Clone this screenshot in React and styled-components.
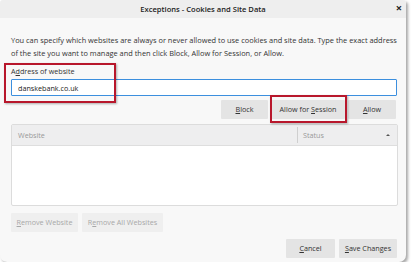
import React from 'react'
import styled, {createGlobalStyle} from 'styled-components'

const GlobalStyle = createGlobalStyle`
    body {
        margin: 0;
        background: #ffffff;
        font-family: "Open Sans", "Noto Sans", sans-serif;
    }
`

const Key = ({children}) => <u>{children}</u>

export default function App(){
    return(
        <>
            <GlobalStyle />
            <Dialog>
                <TitleBar>
                    Exceptions - Cookies and Site Data
                    <Close>×</Close>
                </TitleBar>
                <Body>
                    <Intro>
                        You can specify which websites are always or never allowed to use cookies and site data. Type the exact address of the site you want to manage and then click Block, Allow for Session, or Allow.
                    </Intro>
                    <Label>A<Key>d</Key>dress of website</Label>
                    <Input defaultValue="danskebank.co.uk" />
                    <ButtonRow>
                        <Button $width={47}><Key>B</Key>lock</Button>
                        <Button $width={74}>Allow for <Key>S</Key>ession</Button>
                        <Button $width={48}><Key>A</Key>llow</Button>
                    </ButtonRow>
                    <Table>
                        <HeaderRow>
                            <HeaderCell>Website</HeaderCell>
                            <StatusCell>
                                Status
                                <SortArrow />
                            </StatusCell>
                        </HeaderRow>
                    </Table>
                    <RemoveRow>
                        <Button $disabled $width={67}><Key>R</Key>emove Website</Button>
                        <Button $disabled $width={81}>R<Key>e</Key>move All Websites</Button>
                    </RemoveRow>
                    <FooterRow>
                        <Button $width={49}><Key>C</Key>ancel</Button>
                        <Button $width={58}><Key>S</Key>ave Changes</Button>
                    </FooterRow>
                </Body>
                <Highlight $left={4} $top={63} $width={112} $height={40} />
                <Highlight $left={270} $top={95} $width={77} $height={28} />
            </Dialog>
        </>
    )
}

const Dialog = styled.div`
    position: relative;
    width: 406px;
    height: 262px;
    background: #f8f8f8;
    border-radius: 3px 3px 7px 7px;
    box-shadow: 2px 2px 3px rgba(0, 0, 0, 0.35);
`

const TitleBar = styled.div`
    position: relative;
    height: 18px;
    background: #eeeeee;
    border-radius: 3px 3px 0 0;
    display: flex;
    align-items: center;
    justify-content: center;
    font-size: 7.6px;
    font-weight: 600;
    color: #222;
`

const Close = styled.span`
    position: absolute;
    right: 4px;
    top: 2px;
    font-size: 11px;
    font-weight: 700;
    color: #222;
    line-height: 12px;
`

const Body = styled.div`
    padding: 0 9px 0 11px;
    display: flex;
    flex-direction: column;
`

const Intro = styled.p`
    margin: 16px 0 0 0;
    font-size: 7.42px;
    line-height: 13px;
    color: #333;
`

const Label = styled.div`
    margin-top: 5px;
    font-size: 7.2px;
    line-height: 13px;
    color: #333;
`

const Input = styled.input`
    box-sizing: border-box;
    margin: 1px 0 0 0;
    height: 17px;
    width: 386px;
    border: 1px solid #3c8fde;
    border-radius: 1px;
    background: #fff;
    padding: 0 6px;
    font-family: inherit;
    font-size: 7.2px;
    color: #222;
    outline: none;
`

const ButtonRow = styled.div`
    display: flex;
    justify-content: flex-end;
    gap: 3px;
    margin-top: 4px;
    padding-right: 1px;
`

const Button = styled.div`
    box-sizing: border-box;
    height: 19px;
    width: ${p => p.$width}px;
    line-height: 19px;
    text-align: center;
    white-space: nowrap;
    background: ${p => p.$disabled ? '#efefef' : '#e4e4e4'};
    color: ${p => p.$disabled ? '#a8a8a8' : '#333'};
    font-size: 7.2px;
    border-radius: 1px;

    u {
        text-decoration-thickness: 0.5px;
        text-underline-offset: 1px;
    }
`

const Table = styled.div`
    box-sizing: border-box;
    margin-top: 5px;
    width: 387px;
    height: 82px;
    background: #fff;
    border: 1px solid #dcdcdc;
    border-radius: 2px;
`

const HeaderRow = styled.div`
    height: 20px;
    display: flex;
    background: #eeeeef;
    border-bottom: 1px solid #dedede;
`

const HeaderCell = styled.div`
    flex: 1;
    display: flex;
    align-items: center;
    padding-left: 6px;
    font-size: 7.2px;
    color: #999;
`

const StatusCell = styled.div`
    width: 100px;
    display: flex;
    align-items: center;
    justify-content: space-between;
    padding: 0 7px 0 5px;
    box-sizing: border-box;
    font-size: 7.2px;
    color: #999;
    border-left: 1px solid #cfcfcf;
    margin: 2px 0;
`

const SortArrow = styled.span`
    width: 0;
    height: 0;
    border-left: 2.5px solid transparent;
    border-right: 2.5px solid transparent;
    border-bottom: 2.5px solid #555;
`

const RemoveRow = styled.div`
    display: flex;
    gap: 4px;
    margin-top: 7px;
`

const FooterRow = styled.div`
    display: flex;
    justify-content: flex-end;
    gap: 4px;
    margin-top: 7px;
`

const Highlight = styled.div`
    position: absolute;
    left: ${p => p.$left}px;
    top: ${p => p.$top}px;
    width: ${p => p.$width}px;
    height: ${p => p.$height}px;
    box-sizing: border-box;
    border: 2px solid #b8172c;
    box-shadow: 1px 1px 2px rgba(0, 0, 0, 0.3);
`
